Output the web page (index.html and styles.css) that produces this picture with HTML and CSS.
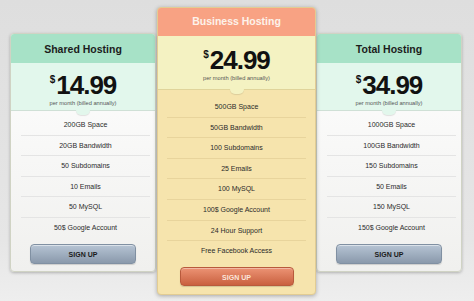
FILE: index.html
```html
<!DOCTYPE html>
<html>
<head>
<meta charset="utf-8">
<link rel="stylesheet" href="styles.css">
</head>
<body>
<div class="table">
  <div class="card side left">
    <div class="head">Shared Hosting</div>
    <div class="price"><div class="amount"><span class="cur">$</span>14.99</div><div class="per">per month (billed annually)</div></div>
    <ul class="features">
      <li>200GB Space</li>
      <li>20GB Bandwidth</li>
      <li>50 Subdomains</li>
      <li>10 Emails</li>
      <li>50 MySQL</li>
      <li>50$ Google Account</li>
    </ul>
    <div class="foot"><a class="btn">SIGN UP</a></div>
  </div>
  <div class="card mid">
    <div class="head">Business Hosting</div>
    <div class="price"><div class="amount"><span class="cur">$</span>24.99</div><div class="per">per month (billed annually)</div></div>
    <ul class="features">
      <li>500GB Space</li>
      <li>50GB Bandwidth</li>
      <li>100 Subdomains</li>
      <li>25 Emails</li>
      <li>100 MySQL</li>
      <li>100$ Google Account</li>
      <li>24 Hour Support</li>
      <li>Free Facebook Access</li>
    </ul>
    <div class="foot"><a class="btn">SIGN UP</a></div>
  </div>
  <div class="card side right">
    <div class="head">Total Hosting</div>
    <div class="price"><div class="amount"><span class="cur">$</span>34.99</div><div class="per">per month (billed annually)</div></div>
    <ul class="features">
      <li>1000GB Space</li>
      <li>100GB Bandwidth</li>
      <li>150 Subdomains</li>
      <li>50 Emails</li>
      <li>150 MySQL</li>
      <li>150$ Google Account</li>
    </ul>
    <div class="foot"><a class="btn">SIGN UP</a></div>
  </div>
</div>
</body>
</html>
```
FILE: styles.css
```css
html, body { margin: 0; padding: 0; }
body {
  width: 474px; height: 301px; overflow: hidden;
  background: linear-gradient(#dedede, #e6e6e6 80%, #eeeeee);
  font-family: "Liberation Sans", Arial, sans-serif;
  color: #333;
}
.table {
  display: flex;
  align-items: flex-start;
  padding: 7px 0 0 10px;
}
.card {
  box-sizing: border-box;
  border-radius: 4px;
  position: relative;
  display: flex;
  flex-direction: column;
}
.side {
  width: 146px;
  margin-top: 26px;
  height: 239px;
  background: linear-gradient(#ffffff, #f0f0ee);
  border: 1px solid #d0d3c4;
  box-shadow: 0 1px 3px rgba(0,0,0,0.25);
}
.left { margin-right: 1px; }
.mid {
  width: 159px;
  height: 288px;
  z-index: 2;
  background: #f6e4ad;
  border: 1px solid #e2cc93;
  box-shadow: 0 1px 4px rgba(0,0,0,0.3);
}
.head {
  font-weight: bold;
  text-align: center;
  font-size: 10.5px;
  color: #1c1c1c;
  border-radius: 3px 3px 0 0;
}
.side .head {
  height: 29px; line-height: 30px;
  background: #a7e2c7;
}
.mid .head {
  height: 28px; line-height: 27px;
  background: #f8a283;
  color: #fdf2ea;
}
.price {
  text-align: center;
  position: relative;
}
.side .price {
  height: 47px;
  background: #e2f7ec;
  border-bottom: 1px solid #cfe0d6;
}
.mid .price {
  height: 53px;
  background: #f4f2c2;
  border-bottom: 1px solid #e0d49a;
}
.price::after {
  content: "";
  position: absolute;
  left: 50%;
  bottom: -5px;
  width: 14px; height: 5px;
  margin-left: -7px;
  border-radius: 0 0 7px 7px;
}
.side .price::after { background: #e2f7ec; box-shadow: 0 1px 1px rgba(0,0,0,0.1); }
.mid .price::after { background: #f4f2c2; box-shadow: 0 1px 1px rgba(0,0,0,0.1); }
.amount {
  font-weight: bold;
  font-size: 26px;
  letter-spacing: -1px;
  color: #111;
  line-height: 26px;
}
.side .amount { padding-top: 4px; }
.mid .amount { padding-top: 6px; }
.cur {
  font-size: 10px;
  vertical-align: 11px;
  letter-spacing: 0;
  margin-right: 1px;
}
.per {
  font-size: 5.7px;
  color: #555;
  margin-top: 2px;
}
.features {
  list-style: none;
  margin: 0;
  padding: 0 5px 0 10px;
}
.side .features { padding-top: 4px; }
.mid .features { padding: 7px 9px 0 9px; }
.features li {
  font-size: 7px;
  text-align: center;
  color: #2a2a2a;
  height: 20.6px;
  line-height: 20.6px;
  box-sizing: border-box;
  border-bottom: 1px solid #e4e4e4;
}
.mid .features li { border-bottom-color: #e8d49c; }
.features li:last-child { border-bottom: none; }
.foot {
  display: flex;
  justify-content: center;
}
.side .foot { padding-top: 5px; }
.mid .foot { padding-top: 5px; }
.btn {
  display: block;
  font-size: 7px;
  font-weight: bold;
  text-align: center;
  border-radius: 4px;
  cursor: pointer;
}
.side .btn {
  width: 106px; height: 20px; line-height: 20px;
  background: linear-gradient(#b6c4d4, #8a99ab);
  border: 1px solid #8090a2;
  box-sizing: border-box;
  color: #1a1a1a;
  box-shadow: inset 0 1px 0 rgba(255,255,255,0.5), 0 1px 1px rgba(0,0,0,0.15);
}
.mid .btn {
  width: 114px; height: 19px; line-height: 19px;
  background: linear-gradient(#ec9374, #c9603f);
  border: 1px solid #b85a3c;
  box-sizing: border-box;
  color: #fbe6da;
  box-shadow: inset 0 1px 0 rgba(255,255,255,0.35), 0 1px 1px rgba(0,0,0,0.15);
}
```
